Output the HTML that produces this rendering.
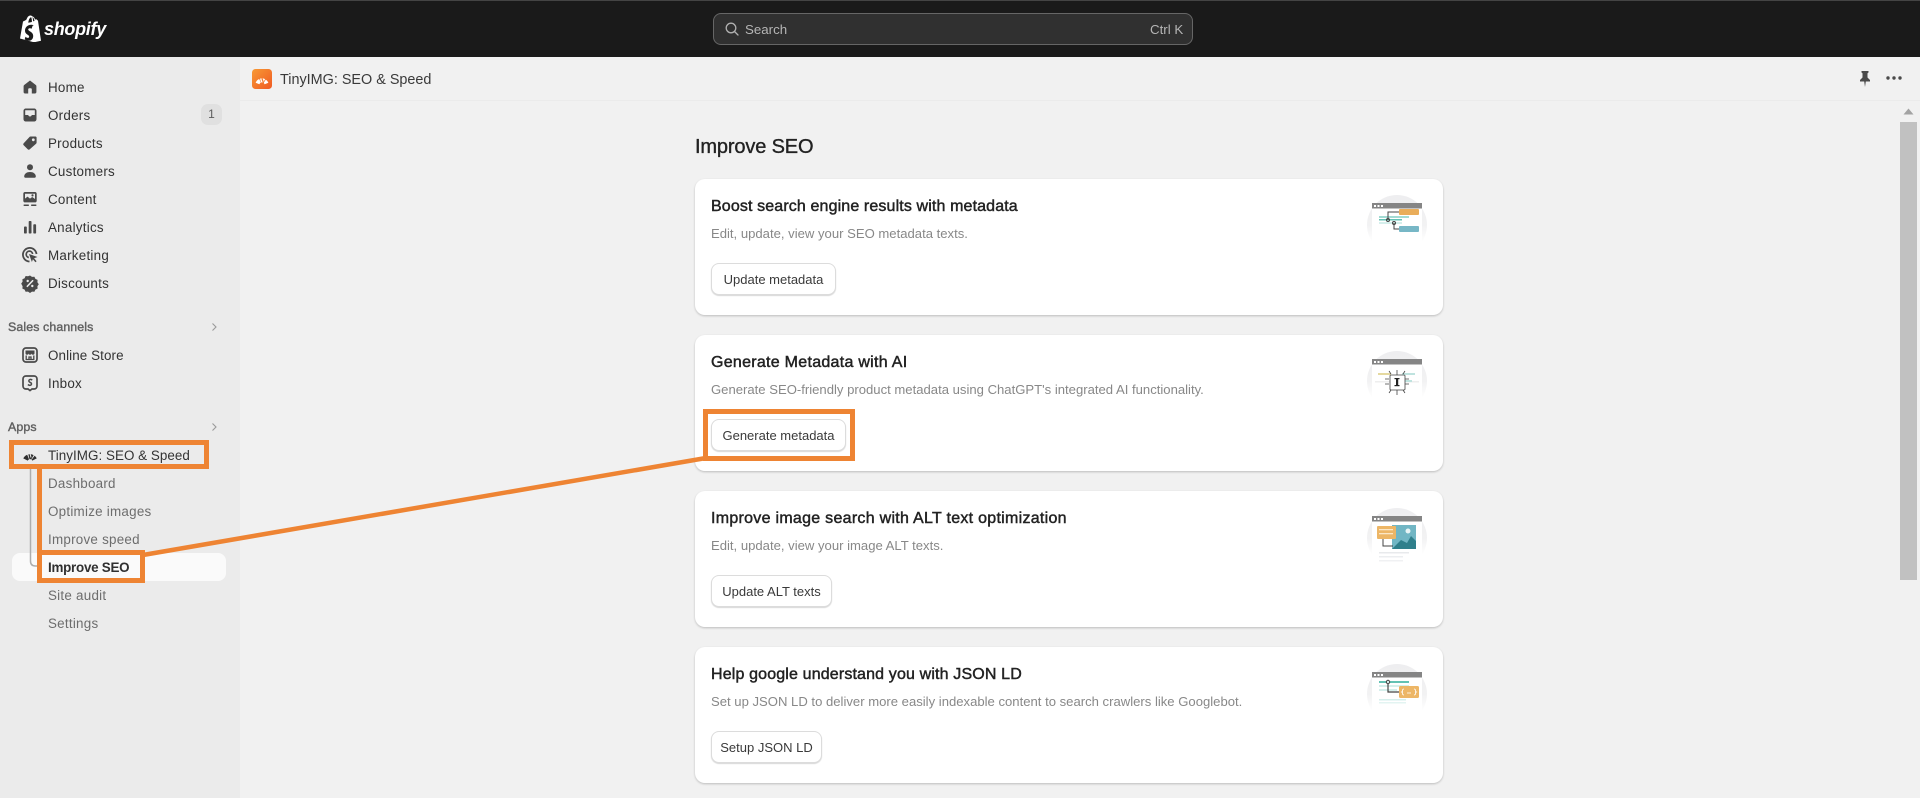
<!DOCTYPE html>
<html><head><meta charset="utf-8"><title>Improve SEO</title>
<style>
*{box-sizing:border-box}
html,body{margin:0;padding:0;width:1920px;height:798px;overflow:hidden;background:#f1f1f1;font-family:"Liberation Sans",sans-serif}
#w0{position:absolute;left:0;top:0;width:1920px;height:798px;filter:blur(.3px)}
.a{position:absolute}
.top{left:0;top:0;width:1920px;height:57px;background:#1a1a1a;border-top:1px solid #444}
.side{left:0;top:57px;width:240px;height:741px;background:#ebebeb}
.nav{position:absolute;left:48px;font-size:13.4px;line-height:20px;color:#333;white-space:nowrap;letter-spacing:.25px;margin-top:1px}
.sub{color:#6d6d6d}
.sec{position:absolute;left:8px;font-size:12.4px;line-height:16px;color:#616161;-webkit-text-stroke:.4px #616161;letter-spacing:.1px}
.ic{position:absolute;left:20px;width:20px;height:20px}
.card{position:absolute;left:695px;width:748px;height:136px;background:#fff;border-radius:10px;box-shadow:0 1px 2px rgba(0,0,0,.22)}
.t{position:absolute;left:16px;top:18px;font-size:16px;line-height:20px;color:#222;white-space:nowrap;-webkit-text-stroke:.45px #222}
.d{position:absolute;left:16px;top:45px;font-size:13.1px;line-height:20px;color:#888;white-space:nowrap}
.b{position:absolute;left:16px;top:84px;height:32px;background:#fff;border:1px solid #dcdcdc;border-radius:8px;box-shadow:0 1px 1px rgba(0,0,0,.16);font-size:13px;line-height:31px;color:#3a3a3a;text-align:center;white-space:nowrap}
.th{position:absolute;left:672px;top:16px;width:60px;height:60px}
.o{position:absolute;background:#ee8433}
</style></head><body><div id="w0">
<div class="a top"></div>
<svg class="a" style="left:19px;top:15px" width="23" height="27" viewBox="0 0 23 27"><path fill="#fff" d="M1 23.5 4 6.5C6 5.5 7 5 7.5 4.500C8.500 1.500 10 .5 11.500 .5c1 0 1.500.5 2 1 1 0 2 1 2.500 3l1.500-.2 1.500 1.500 3 20-7 1.500z"/><path fill="#1a1a1a" d="M15.500 6 15.200 4.800c-.3-1.500-1-2.400-1.800-2.600.5 1 .6 2.300.7 4zM12.900 7c0-1.800-.1-3.300-.7-4.700-1.400.3-2.500 2.100-2.900 5.400zM13.600 10.700l-1 3c-2-.9-3.400-.3-3.400.8 0 1.700 5 2.300 5 6.400 0 3.200-2 4.900-4.500 4.900-2.600 0-4-1.600-4-1.600l.8-2.500s1.400 1.200 2.500 1.200c.8 0 1.200-.6 1.200-1.100 0-2.200-4.200-2.300-4.200-6 0-3 2.100-6 6.500-6 1.600 0 2.100.9 2.100.9z"/></svg>
<div class="a" style="left:44px;top:18px;font-size:18px;line-height:22px;font-weight:700;font-style:italic;color:#fff;letter-spacing:-.3px">shopify</div>
<div class="a" style="left:713px;top:13px;width:480px;height:32px;background:#303030;border:1px solid #666;border-radius:8px"></div>
<svg class="a" style="left:724px;top:21px" width="16" height="16" viewBox="0 0 16 16"><circle cx="7" cy="7" r="4.800" fill="none" stroke="#b0b0b0" stroke-width="1.300"/><path d="M10.500 10.500 14 14" stroke="#b0b0b0" stroke-width="1.300" stroke-linecap="round"/></svg>
<div class="a" style="left:745px;top:19px;font-size:13.300px;line-height:21px;color:#b5b5b5">Search</div>
<div class="a" style="left:1150px;top:19px;font-size:13.300px;line-height:21px;color:#b5b5b5">Ctrl K</div>

<div class="a side"></div>
<svg class="ic" style="top:77px" viewBox="0 0 20 20"><path fill="#4a4a4a" d="M10 3.500 4.200 8c-.4.300-.6.700-.6 1.200V15c0 .8.600 1.500 1.400 1.500h3.200v-4.200c0-.6.500-1 1-1h1.600c.5 0 1 .4 1 1v4.200H15c.8 0 1.400-.7 1.400-1.500V9.200c0-.5-.2-.9-.6-1.200z"/></svg>
<svg class="ic" style="top:105px" viewBox="0 0 20 20"><path fill="#4a4a4a" fill-rule="evenodd" d="M6 3.500h8c1.500 0 2.500 1 2.500 2.500v8c0 1.500-1 2.500-2.500 2.500H6c-1.500 0-2.500-1-2.500-2.500V6c0-1.500 1-2.500 2.500-2.500zM5.200 5.200v4.800h3c.3 1 1 1.500 1.800 1.500s1.500-.5 1.800-1.500h3V5.200z"/></svg>
<svg class="ic" style="top:133px" viewBox="0 0 20 20"><path fill="#4a4a4a" fill-rule="evenodd" d="M10.500 3.500h5c.6 0 1.100.5 1.100 1.100v5c0 .4-.2.700-.4 1L9.800 16.300c-.6.600-1.500.6-2.100 0l-4-4c-.6-.6-.6-1.500 0-2.100L9.600 3.900c.2-.2.500-.4.900-.4zM13.300 5.400a1.400 1.400 0 1 0 0 2.800 1.400 1.400 0 0 0 0-2.800z"/></svg>
<svg class="ic" style="top:161px" viewBox="0 0 20 20"><circle cx="10" cy="6.200" r="3" fill="#4a4a4a"/><path fill="#4a4a4a" d="M4.200 15.500c0-2.800 2.600-4.500 5.800-4.500s5.800 1.700 5.800 4.500c0 .7-.5 1.200-1.200 1.200H5.400c-.7 0-1.200-.5-1.200-1.200z"/></svg>
<svg class="ic" style="top:189px" viewBox="0 0 20 20"><path fill="#4a4a4a" fill-rule="evenodd" d="M5 3h10c1 0 1.700.7 1.700 1.700v7c0 1-.7 1.700-1.700 1.700H5c-1 0-1.700-.7-1.700-1.700v-7C3.300 3.700 4 3 5 3zM5 4.800v4.800l2.500-2 2.500 2 2.200-1.600 2.800 2V4.800zM12.500 5.300a1.100 1.100 0 1 1 0 2.200 1.100 1.100 0 0 1 0-2.200z"/><rect x="3.500" y="15.500" width="5.500" height="1.500" rx=".7" fill="#4a4a4a"/><rect x="11" y="15.500" width="5.500" height="1.500" rx=".7" fill="#4a4a4a"/></svg>
<svg class="ic" style="top:217px" viewBox="0 0 20 20"><rect x="4" y="9.500" width="2.800" height="7" rx=".8" fill="#4a4a4a"/><rect x="8.700" y="4" width="2.800" height="12.500" rx=".8" fill="#4a4a4a"/><rect x="13.300" y="7.200" width="2.800" height="9.300" rx=".8" fill="#4a4a4a"/></svg>
<svg class="ic" style="top:245px" viewBox="0 0 20 20"><path fill="none" stroke="#4a4a4a" stroke-width="1.800" d="M9.500 16.500a6.800 6.800 0 1 1 7-7.500"/><path fill="none" stroke="#4a4a4a" stroke-width="1.700" d="M8.800 12.500a3.200 3.200 0 1 1 3.800-3.500"/><path fill="#4a4a4a" d="m9 9 8.500 3-3.400 1.200 2.500 3-1.200 1.100-2.500-3-1 2.700z"/></svg>
<svg class="ic" style="top:273px" viewBox="0 0 20 20"><path fill="#4a4a4a" fill-rule="evenodd" d="M10 2.500l2 1.400 2.400-.2 1 2.200 2.200 1-.2 2.400 1.400 1.900-1.400 2 .2 2.400-2.200 1-1 2.200-2.400-.2-2 1.400-2-1.400-2.400.2-1-2.200-2.200-1 .2-2.400L1.200 10.600l1.400-2-.2-2.400 2.200-1 1-2.200 2.400.2z"/><path stroke="#ebebeb" stroke-width="1.500" stroke-linecap="round" d="M12.700 7.700l-5.400 5.600"/><circle cx="7.700" cy="8" r="1.200" fill="#ebebeb"/><circle cx="12.300" cy="13" r="1.200" fill="#ebebeb"/></svg>

<div class="nav" style="top:77px">Home</div>
<div class="nav" style="top:105px">Orders</div>
<div class="a" style="left:201px;top:104px;width:21px;height:21px;border-radius:7px;background:#e0e0e0;color:#5c5c5c;font-size:12px;line-height:21px;text-align:center">1</div>
<div class="nav" style="top:133px">Products</div>
<div class="nav" style="top:161px">Customers</div>
<div class="nav" style="top:189px">Content</div>
<div class="nav" style="top:217px">Analytics</div>
<div class="nav" style="top:245px">Marketing</div>
<div class="nav" style="top:273px">Discounts</div>

<div class="sec" style="top:319px">Sales channels</div>
<svg class="a" style="left:208px;top:321px" width="12" height="12" viewBox="0 0 12 12"><path d="M4.500 2.500l3.500 3.500-3.500 3.500" fill="none" stroke="#9a9a9a" stroke-width="1.100"/></svg>
<svg class="ic" style="top:345px" viewBox="0 0 20 20"><rect x="3" y="3" width="14" height="14" rx="3" fill="none" stroke="#4a4a4a" stroke-width="1.700"/><path fill="#4a4a4a" d="M5.500 5.500h9v2.800a1.500 1.500 0 0 1-3 0 1.500 1.500 0 0 1-3 0 1.500 1.500 0 0 1-3 0z"/><path fill="none" stroke="#4a4a4a" stroke-width="1.300" d="M6.200 10.500v4h7.600v-4M9 14.500v-2.500h2v2.500"/></svg>
<svg class="ic" style="top:373px" viewBox="0 0 20 20"><path fill="none" stroke="#4a4a4a" stroke-width="1.700" d="M6 3h8c1.700 0 3 1.300 3 3v7c0 1.700-1.300 3-3 3h-2l-2 1.500L8 16H6c-1.700 0-3-1.300-3-3V6c0-1.700 1.300-3 3-3z"/><path fill="none" stroke="#4a4a4a" stroke-width="1.500" d="M12.200 7.200C11.500 6.500 10.800 6.300 10 6.500c-1.300.3-1.500 1.800-.5 2.500l1.400.8c1 .7.700 2.200-.6 2.500-.8.200-1.600-.1-2.400-.8"/></svg>
<div class="nav" style="top:345px;letter-spacing:.1px">Online Store</div>
<div class="nav" style="top:373px">Inbox</div>

<div class="sec" style="top:419px">Apps</div>
<svg class="a" style="left:208px;top:421px" width="12" height="12" viewBox="0 0 12 12"><path d="M4.500 2.500l3.500 3.500-3.500 3.500" fill="none" stroke="#9a9a9a" stroke-width="1.100"/></svg>

<div class="a" style="left:12px;top:553px;width:214px;height:28px;background:#fafafa;border-radius:8px"></div>
<svg class="a" style="left:28px;top:468px" width="12" height="102" viewBox="0 0 12 102"><path d="M2.500 0V93q0 5 5 5H12" fill="none" stroke="#adadad" stroke-width="1.500"/></svg>

<svg class="ic" style="top:445px" viewBox="0 0 20 20"><path d="M5.500 14.500A5 5 0 0 1 14.500 14.500" fill="none" stroke="#303030" stroke-width="5" stroke-dasharray="3.600 .8"/><path d="M10 8.500l1 4" stroke="#ebebeb" stroke-width="1"/></svg>
<div class="nav" style="top:445px;letter-spacing:.05px">TinyIMG: SEO &amp; Speed</div>
<div class="nav sub" style="top:473px">Dashboard</div>
<div class="nav sub" style="top:501px">Optimize images</div>
<div class="nav sub" style="top:529px">Improve speed</div>
<div class="nav" style="top:557px;font-weight:700;letter-spacing:-.25px;color:#303030">Improve SEO</div>
<div class="nav sub" style="top:585px">Site audit</div>
<div class="nav sub" style="top:613px">Settings</div>

<div class="a" style="left:240px;top:100px;width:1680px;height:1px;background:#ebebeb"></div>
<svg class="a" style="left:252px;top:69px" width="20" height="20" viewBox="0 0 20 20"><defs><linearGradient id="g" x1="0" y1="0" x2="1" y2="1"><stop offset="0" stop-color="#f79a35"/><stop offset="1" stop-color="#f05a22"/></linearGradient></defs><rect width="20" height="20" rx="3.500" fill="url(#g)"/><path d="M5.500 14.500A4.800 4.800 0 0 1 14.500 14.500" fill="none" stroke="#fff" stroke-width="4" stroke-dasharray="3.700 .6"/><path d="M10 9.500l1.500 4.500" stroke="#f57a2a" stroke-width="1.200"/></svg>
<div class="a" style="left:280px;top:70px;font-size:14.400px;line-height:20px;color:#3a3a3a;white-space:nowrap">TinyIMG: SEO &amp; Speed</div>
<svg class="a" style="left:1855px;top:70px" width="20" height="18" viewBox="0 0 20 18"><path fill="#4a4a4a" d="M6.500 1h7v1.500l-1 .8v4.200l2.500 2.500v1.500h-4.200L10 17l-.8-5.500H5V10l2.500-2.500V3.300l-1-.8z"/></svg>
<svg class="a" style="left:1885px;top:74px" width="18" height="8" viewBox="0 0 18 8"><circle cx="3" cy="4" r="1.700" fill="#4a4a4a"/><circle cx="9" cy="4" r="1.700" fill="#4a4a4a"/><circle cx="15" cy="4" r="1.700" fill="#4a4a4a"/></svg>
<svg class="a" style="left:1903px;top:108px" width="11" height="7" viewBox="0 0 11 7"><path d="M.5 6.500 5.500.5l5 6z" fill="#a3a3a3"/></svg>
<div class="a" style="left:1900px;top:122px;width:17px;height:458px;background:#c1c1c1"></div>

<div class="a" style="left:695px;top:134px;font-size:20px;line-height:26px;color:#222;white-space:nowrap;letter-spacing:-.15px;-webkit-text-stroke:.35px #222">Improve SEO</div>

<svg width="0" height="0" style="position:absolute"><defs><linearGradient id="c" x1="0" y1="0" x2="0" y2="1"><stop offset="0" stop-color="#eeeef0"/><stop offset=".5" stop-color="#f2f2f3"/><stop offset=".78" stop-color="#fff"/></linearGradient><linearGradient id="w" x1="0" y1="0" x2="0" y2="1"><stop offset="0" stop-color="#fff"/><stop offset=".75" stop-color="#fff"/><stop offset="1" stop-color="#fff" stop-opacity="0"/></linearGradient></defs></svg>

<div class="card" style="top:179px">
<div class="t" style="letter-spacing:.13px">Boost search engine results with metadata</div>
<div class="d">Edit, update, view your SEO metadata texts.</div>
<div class="b" style="width:125px">Update metadata</div>
<svg class="th" viewBox="0 0 60 60"><circle cx="30" cy="30" r="30" fill="url(#c)"/><rect x="5" y="8" width="50" height="52" fill="url(#w)"/><rect x="5" y="8" width="50" height="5.500" fill="#858585"/><g fill="#fff"><rect x="7" y="10" width="2" height="2"/><rect x="10.500" y="10" width="2" height="2"/><rect x="14" y="10" width="2" height="2"/></g><rect x="32" y="14" width="20" height="6" rx="1" fill="#e9ad5a"/><rect x="12" y="21" width="30" height="2" fill="#a3dbd3"/><rect x="12" y="24" width="23" height="1.500" fill="#63c2b4"/><rect x="12" y="27" width="23" height="2" fill="#d5efec"/><rect x="32" y="31" width="20" height="6" rx="1" fill="#77b7c6"/><path d="M32 17H21v8M27 28v6h5" fill="none" stroke="#444" stroke-width="1"/><circle cx="21" cy="25" r="1.500" fill="none" stroke="#444"/><circle cx="27" cy="28" r="1.500" fill="none" stroke="#444"/></svg>
</div>

<div class="card" style="top:335px">
<div class="t" style="letter-spacing:.28px">Generate Metadata with AI</div>
<div class="d">Generate SEO-friendly product metadata using ChatGPT's integrated AI functionality.</div>
<div class="b" style="width:135px">Generate metadata</div>
<svg class="th" viewBox="0 0 60 60"><circle cx="30" cy="30" r="30" fill="url(#c)"/><rect x="5" y="8" width="50" height="52" fill="url(#w)"/><rect x="5" y="8" width="50" height="5.500" fill="#858585"/><g fill="#fff"><rect x="7" y="10" width="2" height="2"/><rect x="10.500" y="10" width="2" height="2"/><rect x="14" y="10" width="2" height="2"/></g><rect x="11" y="22" width="13" height="2" fill="#e5d9a0"/><rect x="35" y="22" width="13" height="2" fill="#bfe3df"/><rect x="8" y="30" width="44" height="1.500" fill="#eee"/><rect x="36" y="29" width="9" height="2" fill="#bfe3df"/><rect x="23" y="24" width="15" height="15" rx="1" fill="#fff" stroke="#444" stroke-width=".8"/><path d="M24 23l-2-3M30 24v-5M36 23l2-3M22 28h-4M22 33h-4M38 28h4M38 33h4M24 39l-2 3M30 39v5M36 39l2 3" stroke="#444" stroke-width=".8"/><rect x="29" y="27" width="2.200" height="8" fill="#222"/><rect x="27.500" y="27" width="5" height="1.200" fill="#222"/><rect x="27.500" y="34" width="5" height="1.200" fill="#222"/></svg>
</div>

<div class="card" style="top:491px">
<div class="t" style="letter-spacing:.28px">Improve image search with ALT text optimization</div>
<div class="d">Edit, update, view your image ALT texts.</div>
<div class="b" style="width:121px">Update ALT texts</div>
<svg class="th" style="top:17px" viewBox="0 0 60 60"><circle cx="30" cy="30" r="30" fill="url(#c)"/><rect x="5" y="8" width="50" height="52" fill="url(#w)"/><rect x="5" y="8" width="50" height="5.500" fill="#858585"/><g fill="#fff"><rect x="7" y="10" width="2" height="2"/><rect x="10.500" y="10" width="2" height="2"/><rect x="14" y="10" width="2" height="2"/></g><rect x="25" y="17" width="24" height="24" fill="#71b6c4"/><circle cx="41" cy="23" r="2.500" fill="#e8f4f5"/><path d="M25 41l9-9 6 3 4-7 5 5v8z" fill="#2f7f8b"/><rect x="10" y="18" width="19" height="13" rx="1" fill="#edb666"/><rect x="12" y="21" width="14" height="1.300" fill="#fbe7c6"/><rect x="12" y="25" width="14" height="1.300" fill="#fbe7c6"/><path d="M16 31v7h10" fill="none" stroke="#444" stroke-width="1"/><rect x="12" y="44" width="30" height="1.500" fill="#e8eaec"/><rect x="12" y="48" width="24" height="1.500" fill="#eceef0"/><rect x="12" y="52" width="24" height="1.500" fill="#f0f1f3"/></svg>
</div>

<div class="card" style="top:647px">
<div class="t" style="letter-spacing:.15px">Help google understand you with JSON LD</div>
<div class="d">Set up JSON LD to deliver more easily indexable content to search crawlers like Googlebot.</div>
<div class="b" style="width:111px">Setup JSON LD</div>
<svg class="th" style="top:17px" viewBox="0 0 60 60"><circle cx="30" cy="30" r="30" fill="url(#c)"/><rect x="5" y="8" width="50" height="52" fill="url(#w)"/><rect x="5" y="8" width="50" height="5.500" fill="#858585"/><g fill="#fff"><rect x="7" y="10" width="2" height="2"/><rect x="10.500" y="10" width="2" height="2"/><rect x="14" y="10" width="2" height="2"/></g><rect x="12" y="17" width="30" height="2" fill="#63c2b4"/><rect x="12" y="21" width="30" height="2" fill="#d5efec"/><rect x="12" y="25" width="18" height="2" fill="#d5efec"/><rect x="12" y="35" width="27" height="1.500" fill="#d5efec"/><rect x="12" y="38" width="27" height="1.500" fill="#e3f4f2"/><rect x="32" y="22" width="20" height="12" rx="1.500" fill="#edb666"/><path d="M37 25q-1.500 0-1.500 1.500v1L34.500 28l1 .5v1q0 1.500 1.500 1.500M47 25q1.500 0 1.500 1.500v1l1 .5-1 .5v1q0 1.500-1.500 1.500M40 29h4" fill="none" stroke="#fff" stroke-width=".8"/><path d="M21 19v9h11" fill="none" stroke="#444" stroke-width="1.200"/><circle cx="21" cy="18" r="1.700" fill="#d5efec" stroke="#444"/></svg>
</div>

<!-- annotation -->
<svg class="a" style="left:0;top:0" width="1920" height="798"><path d="M143 555 706 458" stroke="#ee8433" stroke-width="4.500" fill="none"/></svg>
<div class="o" style="left:9px;top:440px;width:200px;height:5px"></div>
<div class="o" style="left:9px;top:464px;width:200px;height:5px"></div>
<div class="o" style="left:9px;top:440px;width:5px;height:29px"></div>
<div class="o" style="left:204px;top:440px;width:5px;height:29px"></div>
<div class="o" style="left:37px;top:469px;width:5px;height:114px"></div>
<div class="o" style="left:37px;top:550px;width:108px;height:5px"></div>
<div class="o" style="left:37px;top:578px;width:108px;height:5px"></div>
<div class="o" style="left:140px;top:550px;width:5px;height:33px"></div>
<div class="o" style="left:703px;top:409px;width:152px;height:5px"></div>
<div class="o" style="left:703px;top:456px;width:152px;height:5px"></div>
<div class="o" style="left:703px;top:409px;width:5px;height:52px"></div>
<div class="o" style="left:850px;top:409px;width:5px;height:52px"></div>
</div></body></html>
